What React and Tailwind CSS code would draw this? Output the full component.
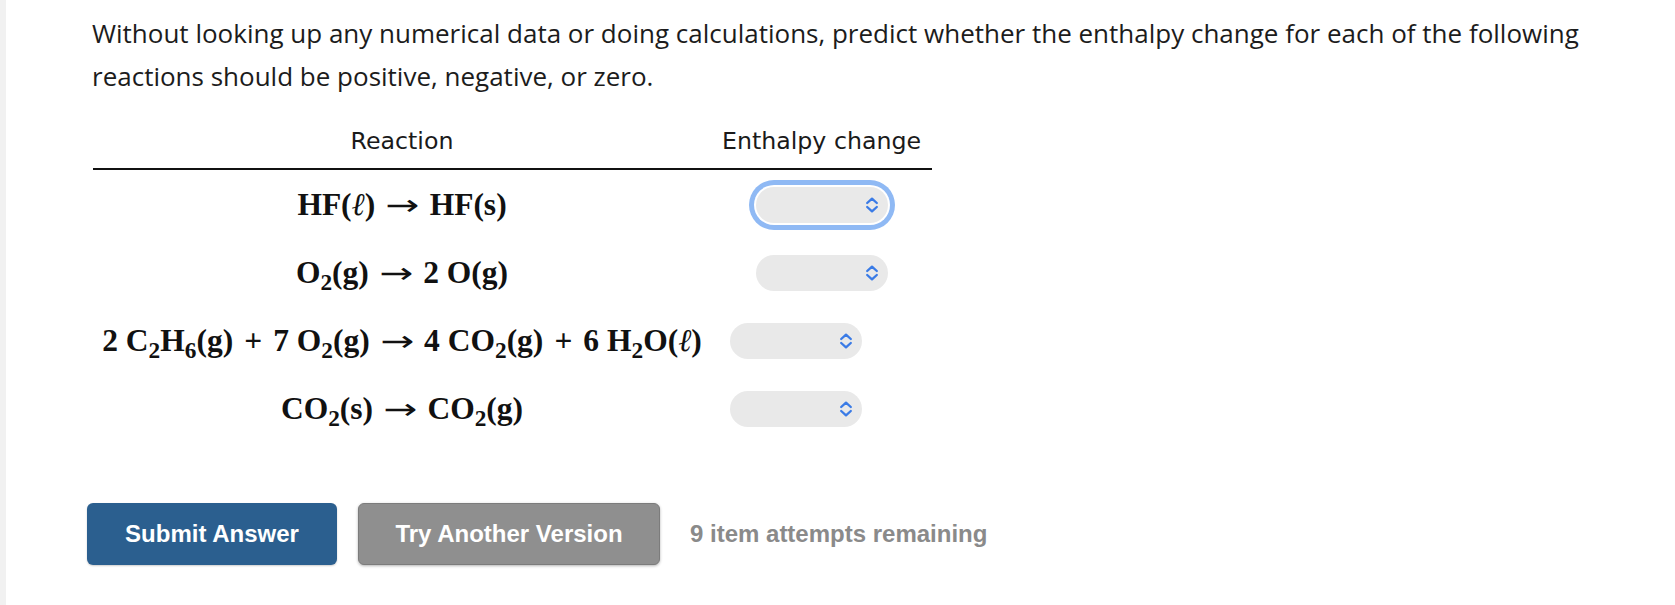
import React from "react";

const Sub = ({ children }) => <sub className="text-[0.74em] bottom-[-0.3em]">{children}</sub>;
const Bin = ({ children }) => <span className="mx-[0.35em]">{children}</span>;
const Rel = () => (
  <span className="inline-block mx-[0.52em] scale-x-[1.4] font-['DejaVu_Sans',sans-serif] font-normal text-[0.92em]">→</span>
);
const Ell = () => <span className="font-normal italic">ℓ</span>;

const reactions = [
  {
    id: 1,
    focused: true,
    shift: false,
    eq: (
      <>
        HF(<Ell />)<Rel />HF(s)
      </>
    ),
  },
  {
    id: 2,
    focused: false,
    shift: false,
    eq: (
      <>
        O<Sub>2</Sub>(g)<Rel />2 O(g)
      </>
    ),
  },
  {
    id: 3,
    focused: false,
    shift: true,
    eq: (
      <>
        2 C<Sub>2</Sub>H<Sub>6</Sub>(g)<Bin>+</Bin>7 O<Sub>2</Sub>(g)<Rel />4 CO<Sub>2</Sub>(g)
        <Bin>+</Bin>6 H<Sub>2</Sub>O(<Ell />)
      </>
    ),
  },
  {
    id: 4,
    focused: false,
    shift: true,
    eq: (
      <>
        CO<Sub>2</Sub>(s)<Rel />CO<Sub>2</Sub>(g)
      </>
    ),
  },
];

const Chevrons = () => (
  <svg width="14" height="16" viewBox="0 0 14 16" fill="none" stroke="#3a7be6" strokeWidth="2.3" strokeLinecap="round" strokeLinejoin="round">
    <path d="M2.2 6 L7 1.6 L11.8 6" />
    <path d="M2.2 10 L7 14.4 L11.8 10" />
  </svg>
);

const SelectBox = ({ focused }) => (
  <button
    type="button"
    className={
      "w-[132px] h-[36px] rounded-full bg-[#e9e9e9] flex items-center justify-end pr-[9px] " +
      (focused ? "shadow-[0_0_0_2px_#ffffff,0_0_0_7px_#8fb9f4]" : "")
    }
  >
    <Chevrons />
  </button>
);

export default function App() {
  return (
    <div className="min-h-[605px] w-full bg-white flex">
      <div className="w-[6px] shrink-0 bg-[#f1f1f1]" />
      <div className="pl-[81px] pt-[12px]">
        <p className="w-[1530px] ml-[5px] font-['Open_Sans',sans-serif] text-[26px] leading-[43px] text-[#1c1c1c]">
          Without looking up any numerical data or doing calculations, predict whether the enthalpy change for each of the following reactions should be positive, negative, or zero.
        </p>

        <div className="ml-[6px] mt-[27px] w-[839px]">
          <div className="grid grid-cols-[618px_221px] border-b-2 border-[#111] pb-[11px] font-['DejaVu_Sans',sans-serif] text-[23.7px] leading-[32px] text-[#1a1a1a]">
            <div className="text-center">Reaction</div>
            <div className="text-center">Enthalpy change</div>
          </div>
          <div className="pt-[1px]">
            {reactions.map((r) => (
              <div key={r.id} className="grid grid-cols-[618px_221px] h-[68px] items-center">
                <div className="text-center font-['Liberation_Serif','DejaVu_Serif',serif] font-bold text-[31.5px] leading-none text-[#111] whitespace-nowrap">
                  {r.eq}
                </div>
                <div className={"flex justify-center " + (r.shift ? "pr-[51px]" : "")}>
                  <SelectBox focused={r.focused} />
                </div>
              </div>
            ))}
          </div>
        </div>

        <div className="mt-[60px] flex items-center font-['Liberation_Sans',Arial,sans-serif] font-bold text-[24px]">
          <button className="w-[250px] h-[62px] rounded-[6px] bg-[#2b5f8f] text-white shadow-[0_1px_2px_rgba(0,0,0,0.2)]">
            Submit Answer
          </button>
          <button className="ml-[21px] w-[302px] h-[62px] rounded-[6px] bg-[#8f8f8f] border border-[#7c7c7c] text-white shadow-[0_1px_3px_rgba(0,0,0,0.3)]">
            Try Another Version
          </button>
          <span className="ml-[30px] text-[#8a8a8a]">9 item attempts remaining</span>
        </div>
      </div>
    </div>
  );
}
